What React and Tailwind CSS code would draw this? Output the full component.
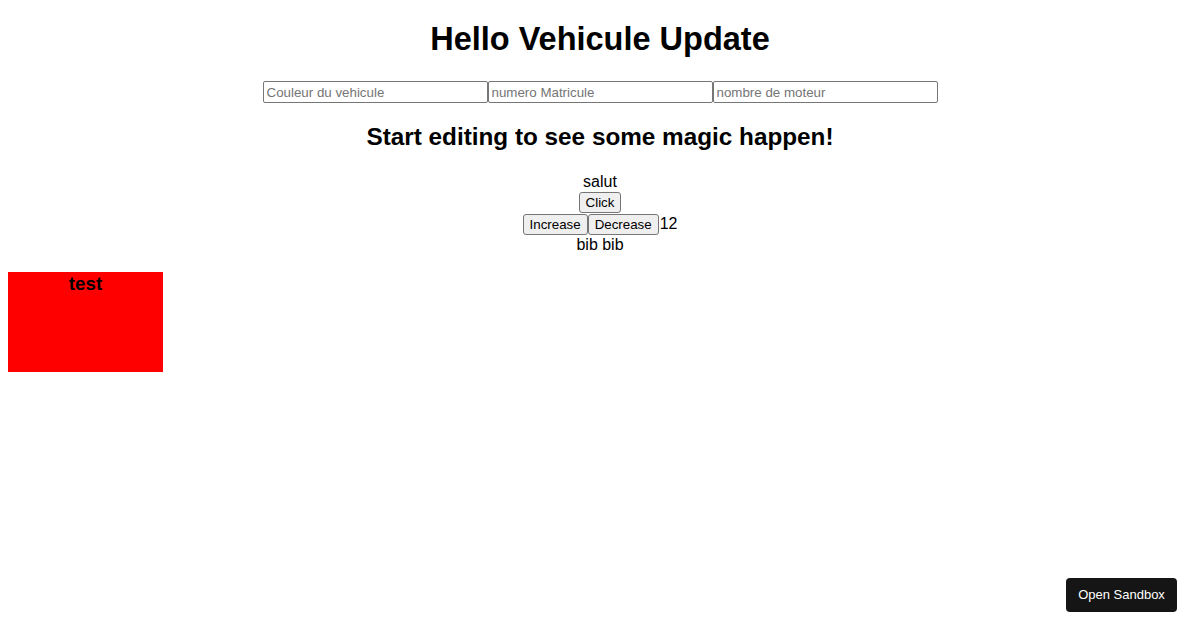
export default function App() {
  const btn =
    "bg-[#efefef] border border-[#767676] rounded-[3px] px-[6px] py-[1px] text-[13.33px] leading-[17px] h-[21px] text-black align-middle";
  const input =
    "w-[225px] h-[22px] border border-[#767676] rounded-[2px] px-[3px] text-[13.33px] text-black placeholder:text-[#757575] outline-none align-middle";

  return (
    <div className="min-h-[630px] bg-white text-black font-['Liberation_Sans',Arial,sans-serif] px-2 text-center">
      <h1 className="pt-[21px] text-[32.5px] font-bold leading-[37px]">Hello Vehicule Update</h1>

      <div className="mt-[23px] flex justify-center">
        <input className={input} placeholder="Couleur du vehicule" />
        <input className={input} placeholder="numero Matricule" />
        <input className={input} placeholder="nombre de moteur" />
      </div>

      <h2 className="mt-[20px] text-[24.3px] font-bold leading-[28px]">
        Start editing to see some magic happen!
      </h2>

      <div className="mt-[22px] text-base leading-[18px]">
        <div>salut</div>
        <div className="mt-[1px] h-[21px]">
          <button className={btn}>Click</button>
        </div>
        <div className="flex justify-center items-center mt-[1px] h-[21px]">
          <button className={btn}>Increase</button>
          <button className={btn}>Decrease</button>
          <span className="ml-[1px] -mt-[2px]">12</span>
        </div>
        <div className="mt-[1px]">bib bib</div>
      </div>

      <div className="mt-[18px] w-[155px] h-[100px] bg-[#ff0000]">
        <h3 className="text-[18.72px] font-bold leading-[22px] pt-[1px]">test</h3>
      </div>

      <button className="fixed right-[23px] bottom-[18px] w-[111px] h-[34px] bg-[#151515] text-white text-[13px] rounded-[4px]">
        Open Sandbox
      </button>
    </div>
  );
}
